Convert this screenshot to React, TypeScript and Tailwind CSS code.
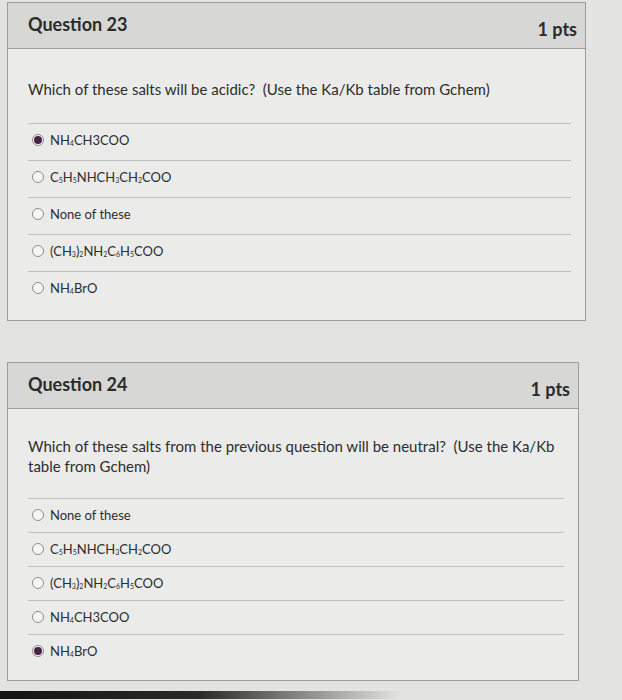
import React from 'react';

type Option = {
  id: string;
  label: React.ReactNode;
  selected?: boolean;
};

const S = ({ children }: { children: React.ReactNode }) => (
  <sub className="text-[7px] bottom-[-0.1em]">{children}</sub>
);

const NH4CH3COO = <>NH<S>4</S>CH3COO</>;
const C5H5 = <>C<S>5</S>H<S>5</S>NHCH<S>3</S>CH<S>2</S>COO</>;
const CH3NH2 = <>(CH<S>3</S>)<S>2</S>NH<S>2</S>C<S>6</S>H<S>5</S>COO</>;
const NH4BrO = <>NH<S>4</S>BrO</>;

const q23: Option[] = [
  { id: 'a', label: NH4CH3COO, selected: true },
  { id: 'b', label: C5H5 },
  { id: 'c', label: 'None of these' },
  { id: 'd', label: CH3NH2 },
  { id: 'e', label: NH4BrO },
];

const q24: Option[] = [
  { id: 'a', label: 'None of these' },
  { id: 'b', label: C5H5 },
  { id: 'c', label: CH3NH2 },
  { id: 'd', label: NH4CH3COO },
  { id: 'e', label: NH4BrO, selected: true },
];

function Radio({ selected }: { selected?: boolean }) {
  return (
    <span className="flex h-[12px] w-[12px] shrink-0 items-center justify-center rounded-full border border-[#8d8e8d] bg-[#f6f6f5]">
      {selected && <span className="h-[8px] w-[8px] rounded-full bg-[#4a2246]" />}
    </span>
  );
}

function QuestionCard({
  title,
  text,
  options,
  width,
  bodyClass,
  listClass,
  rowClass,
}: {
  title: string;
  text: string;
  options: Option[];
  width: string;
  bodyClass: string;
  listClass: string;
  rowClass: string;
}) {
  return (
    <div className={`${width} border border-[#9c9d9c] bg-[#ebecea]`}>
      <div className="flex h-[46px] justify-between border-b border-[#9c9d9c] bg-[#d7d8d6] pl-5 pr-[8px]">
        <div className="pt-[10px] text-[18px] font-bold leading-[22px] text-[#2b2b2b]">{title}</div>
        <div className="pt-[15px] text-[18px] font-bold leading-[22px] text-[#2b2b2b]">1 pts</div>
      </div>
      <div className={`pb-[12px] pl-5 pr-[14px] ${bodyClass}`}>
        <p className="whitespace-pre-wrap text-[15px] leading-[20px] text-[#2d2d2d]">{text}</p>
        <ul className={listClass}>
          {options.map((o) => (
            <li
              key={o.id}
              className={`flex items-center gap-[6px] border-t border-[#bfc0be] pl-[4px] pt-[6px] ${rowClass}`}
            >
              <Radio selected={o.selected} />
              <span className="text-[13px] leading-[20px] text-[#2d2d2d]">{o.label}</span>
            </li>
          ))}
        </ul>
      </div>
    </div>
  );
}

export default function App() {
  return (
    <div className="h-[700px] overflow-hidden bg-[#e3e4e2] pl-[7px] pt-[2px] font-['Lato','Liberation_Sans',sans-serif]">
      <QuestionCard
        title="Question 23"
        text="Which of these salts will be acidic?  (Use the Ka/Kb table from Gchem)"
        options={q23}
        width="w-[579px]"
        bodyClass="pt-[30px]"
        listClass="mt-[24px]"
        rowClass="pb-[10px]"
      />
      <div className="mt-[41px]">
        <QuestionCard
          title="Question 24"
          text="Which of these salts from the previous question will be neutral?  (Use the Ka/Kb table from Gchem)"
          options={q24}
          width="w-[572px]"
          bodyClass="pt-[27px]"
          listClass="mt-[22px]"
          rowClass="pb-[7px]"
        />
      </div>
      <div className="-ml-[7px] mt-[10px] h-[8px] w-[400px] bg-gradient-to-r from-[#151515] via-[#2a2a2a] to-transparent" />
    </div>
  );
}
